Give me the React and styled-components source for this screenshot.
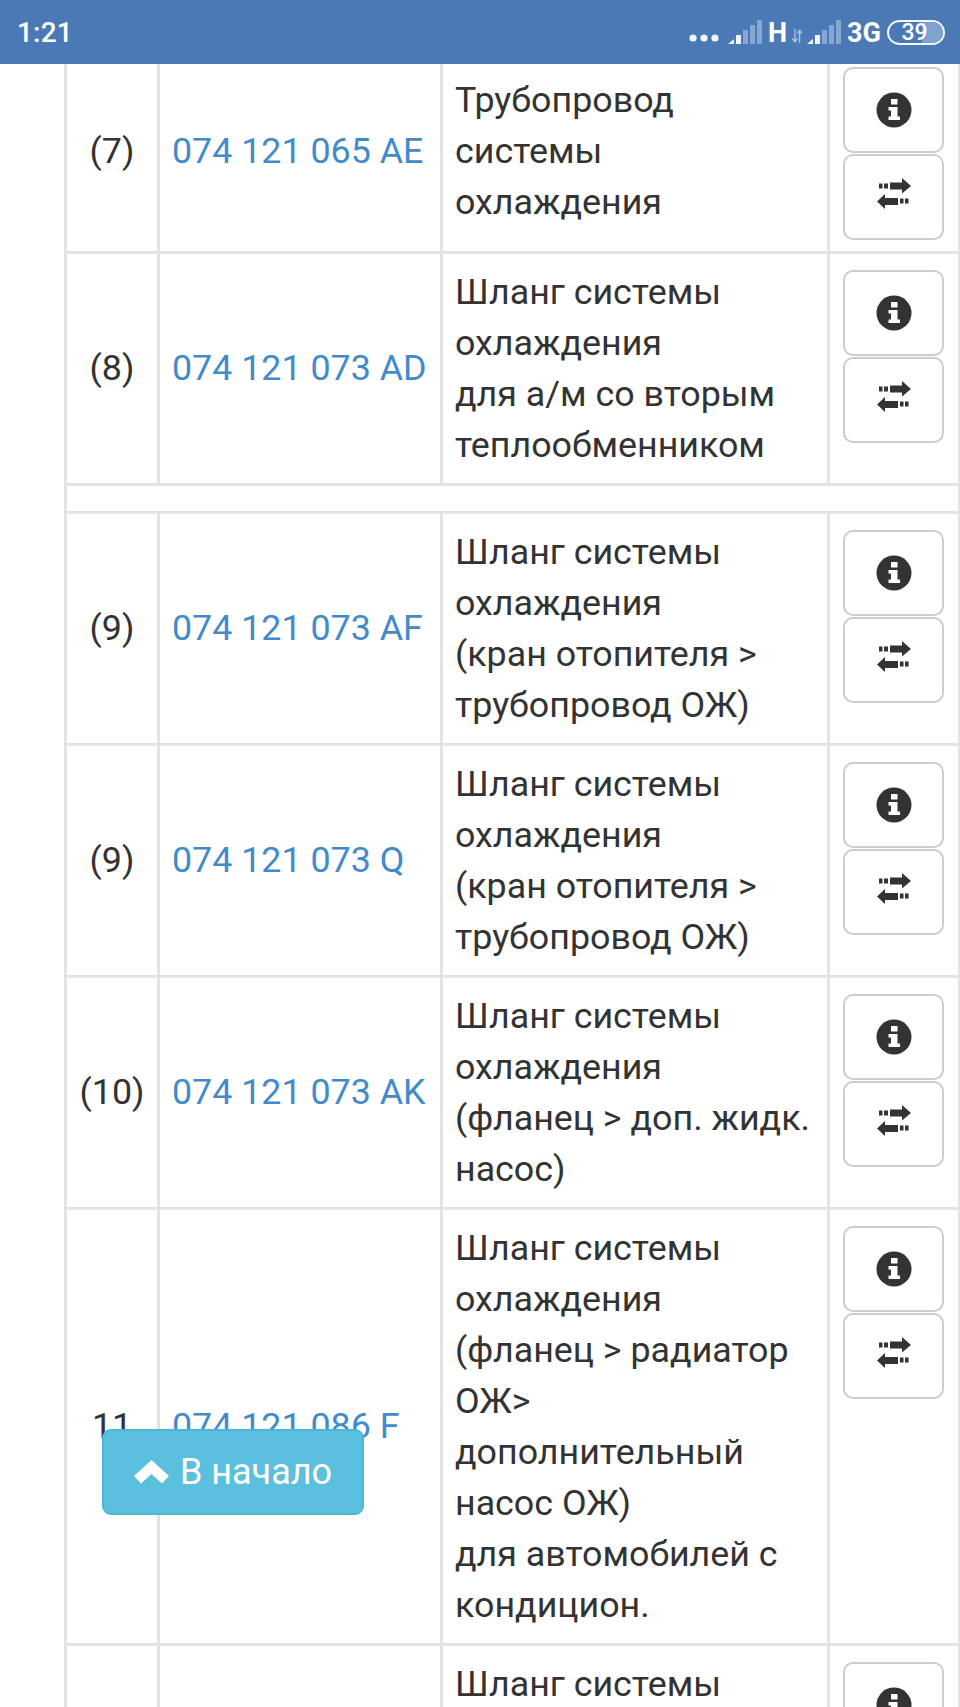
import React from "react";
import styled, { createGlobalStyle } from "styled-components";

const Global = createGlobalStyle`
  html, body {
    margin: 0;
    height: 1707px;
    overflow: hidden;
    background: #fff;
  }
  body {
    font-family: Roboto, "Liberation Sans", sans-serif;
    color: #333;
  }
`;

const Page = styled.div`
  position: relative;
  width: 960px;
  height: 1707px;
  overflow: hidden;
`;

const StatusBar = styled.header`
  position: relative;
  z-index: 2;
  height: 64px;
  background: #4b79b6;
  color: #fff;
  display: flex;
  align-items: center;
  justify-content: space-between;
  padding: 0 15px 0 17px;
  box-sizing: border-box;
`;

const Clock = styled.span`
  font-size: 28px;
  font-weight: 500;
  letter-spacing: 0.2px;
`;

const StatusIcons = styled.div`
  display: flex;
  align-items: center;
  gap: 5px;
`;

const NetLabel = styled.span`
  font-size: 27px;
  font-weight: 700;
  line-height: 1;
  margin-top: 2px;
`;

const Battery = styled.div`
  position: relative;
  width: 58px;
  height: 25px;
  margin-left: 1px;
  box-sizing: border-box;
  border: 2.5px solid #f2f6fb;
  border-radius: 13px;
  display: flex;
  align-items: center;
  justify-content: center;
  overflow: hidden;
  font-size: 23px;
  font-weight: 500;
`;

const BatteryFill = styled.i`
  position: absolute;
  top: 0;
  bottom: 0;
  right: 0;
  width: 39%;
  background: #7fa2cf;
`;

const BatteryText = styled.span`
  position: relative;
  margin-right: 3px;
`;

const Table = styled.table`
  margin: -16px 0 0 64px;
  width: 894px;
  table-layout: fixed;
  border-collapse: collapse;
  font-size: 35.8px;
  line-height: 51px;
`;

const Cell = styled.td`
  border: 3px solid #e3e3e3;
  padding: 12.5px 12px;
  vertical-align: ${(p) => (p.$top ? "top" : "middle")};
  text-align: ${(p) => (p.$center ? "center" : "left")};
`;

const PosCell = styled(Cell)`
  padding: 12.5px 0;
`;

const ActionCell = styled(Cell)`
  padding: 16px 0 11px 13px;
`;

const Spacer = styled.td`
  border: 3px solid #e3e3e3;
  height: 25px;
  padding: 0;
`;

const PartLink = styled.a`
  color: #428bca;
  text-decoration: none;
  white-space: nowrap;
`;

const Actions = styled.div`
  display: flex;
  flex-direction: column;
  gap: 1px;
`;

const IconButton = styled.button`
  width: 101px;
  height: 86px;
  padding: 0;
  background: #fff;
  border: 2.5px solid #ccc;
  border-radius: 10px;
  display: flex;
  align-items: center;
  justify-content: center;
`;

const TopButton = styled.a`
  position: absolute;
  z-index: 1;
  left: 102px;
  top: 1429px;
  width: 262px;
  height: 86px;
  box-sizing: border-box;
  background: #5bc0de;
  border: 2px solid #46b8da;
  border-radius: 9px;
  color: #fff;
  font-size: 36px;
  display: flex;
  align-items: center;
  justify-content: center;
  gap: 11px;
`;

const Dots = () => (
  <svg width="32" height="10" viewBox="0 0 32 10" style={{ marginTop: 12, marginRight: 3 }}>
    <g fill="#f2f6fb">
      <circle cx="5" cy="5" r="3.6" />
      <circle cx="16" cy="5" r="3.6" />
      <circle cx="27" cy="5" r="3.6" />
    </g>
  </svg>
);

const Signal = () => (
  <svg width="35" height="26" viewBox="0 0 35 26">
    <path d="M0 25 L6 20 V25 Z" fill="#f2f6fb" />
    <rect x="8" y="16" width="5" height="9" fill="#f2f6fb" />
    <g fill="#86a7d2">
      <rect x="15" y="11" width="5" height="14" />
      <rect x="22" y="6" width="5" height="19" />
      <rect x="29" y="1" width="5" height="24" />
    </g>
  </svg>
);

const TransferSmall = () => (
  <svg width="10" height="14" viewBox="0 0 10 14" style={{ marginTop: 8 }}>
    <path d="M3 0 V12 M3 13 L0.5 9.5 M3 13 L5.5 9.5 M7.5 14 V2 M7.5 1 L5.5 4.5 M7.5 1 L9.8 4.5" stroke="#a9c1e0" strokeWidth="1.4" fill="none" />
  </svg>
);

const InfoIcon = () => (
  <svg width="36" height="36" viewBox="0 0 36 36">
    <circle cx="18" cy="18" r="17.5" fill="#333" />
    <rect x="15" y="7" width="6.5" height="5.5" fill="#fff" />
    <path d="M12.5 15 H21.5 V24.5 H24 V28 H12.5 V24.5 H15 V18.5 H12.5 Z" fill="#fff" />
  </svg>
);

const TransferIcon = () => (
  <svg width="36" height="32" viewBox="0 0 36 32" style={{ marginBottom: 6 }}>
    <g fill="#333">
      <rect x="3" y="5.5" width="3.5" height="5" />
      <rect x="8" y="5.5" width="4" height="5" />
      <path d="M14 4.5 H26 V0 L35 8 L26 15.5 V11.5 H14 Z" />
      <path d="M1 23.5 L9 16 V20 H22 V27 H9 V31 Z" />
      <rect x="24" y="20.5" width="3.5" height="5" />
      <rect x="29" y="20.5" width="3.5" height="5" />
    </g>
  </svg>
);

const Chevron = () => (
  <svg width="35" height="24" viewBox="0 0 35 24">
    <path d="M17.5 0 L35 16 L28 23.5 L17.5 14 L7 23.5 L0 16 Z" fill="#fff" />
  </svg>
);

const rows = [
  { pos: "(7)", part: "074 121 065 AE", lines: ["Трубопровод", "системы", "охлаждения"] },
  { pos: "(8)", part: "074 121 073 AD", lines: ["Шланг системы", "охлаждения", "для а/м со вторым", "теплообменником"] },
  { spacer: true },
  { pos: "(9)", part: "074 121 073 AF", lines: ["Шланг системы", "охлаждения", "(кран отопителя >", "трубопровод ОЖ)"] },
  { pos: "(9)", part: "074 121 073 Q", lines: ["Шланг системы", "охлаждения", "(кран отопителя >", "трубопровод ОЖ)"] },
  { pos: "(10)", part: "074 121 073 AK", lines: ["Шланг системы", "охлаждения", "(фланец > доп. жидк.", "насос)"] },
  {
    pos: "11",
    part: "074 121 086 F",
    lines: ["Шланг системы", "охлаждения", "(фланец > радиатор", "ОЖ>", "дополнительный", "насос ОЖ)", "для автомобилей с", "кондицион."],
  },
  { pos: "", part: "", lines: ["Шланг системы", "охлаждения", "", ""] },
];

export default function App() {
  return (
    <Page>
      <Global />
      <StatusBar>
        <Clock>1:21</Clock>
        <StatusIcons>
          <Dots />
          <Signal />
          <NetLabel>H</NetLabel>
          <TransferSmall />
          <Signal />
          <NetLabel>3G</NetLabel>
          <Battery>
            <BatteryFill />
            <BatteryText>39</BatteryText>
          </Battery>
        </StatusIcons>
      </StatusBar>

      <Table>
        <colgroup>
          <col width="93" />
          <col width="283" />
          <col width="387" />
          <col width="131" />
        </colgroup>
        <tbody>
          {rows.map((row, i) =>
            row.spacer ? (
              <tr key={i}>
                <Spacer colSpan={4} />
              </tr>
            ) : (
              <tr key={i}>
                <PosCell $center>{row.pos}</PosCell>
                <Cell>
                  <PartLink href="#">{row.part}</PartLink>
                </Cell>
                <Cell>
                  {row.lines.map((line, j) => (
                    <div key={j}>{line || "\u00a0"}</div>
                  ))}
                </Cell>
                <ActionCell $top>
                  <Actions>
                    <IconButton>
                      <InfoIcon />
                    </IconButton>
                    <IconButton>
                      <TransferIcon />
                    </IconButton>
                  </Actions>
                </ActionCell>
              </tr>
            )
          )}
        </tbody>
      </Table>

      <TopButton>
        <Chevron />
        В начало
      </TopButton>
    </Page>
  );
}
